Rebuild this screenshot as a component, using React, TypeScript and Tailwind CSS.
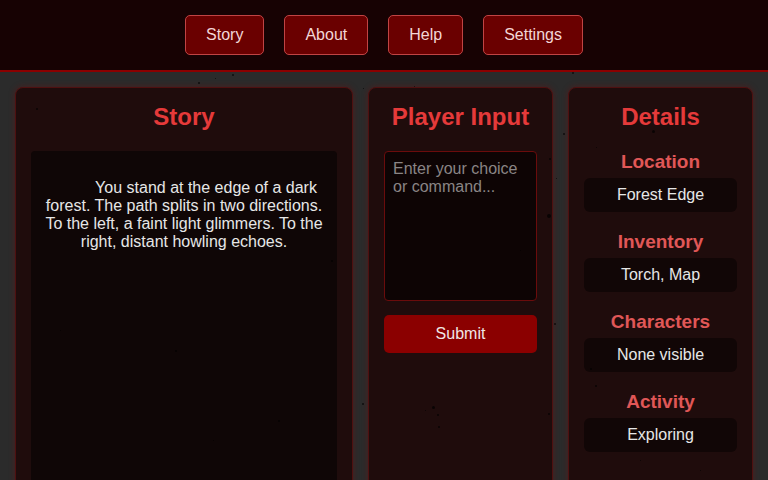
import React from "react"

const navItems = ["Story", "About", "Help", "Settings"]

const details = [
  { label: "Location", value: "Forest Edge" },
  { label: "Inventory", value: "Torch, Map" },
  { label: "Characters", value: "None visible" },
  { label: "Activity", value: "Exploring" },
]

// faint speckles scattered over the page
const specks = [
  [198, 82, 2], [232, 74, 2], [215, 78, 1], [414, 86, 1], [572, 72, 2], [36, 108, 2],
  [563, 133, 2], [549, 158, 2], [596, 147, 1], [652, 130, 3], [547, 214, 4], [556, 178, 1],
  [437, 414, 2], [432, 406, 3], [425, 410, 1], [438, 426, 2], [548, 413, 2], [362, 403, 2],
  [595, 385, 2], [590, 368, 2], [554, 323, 2], [278, 420, 2], [363, 88, 1], [213, 440, 1],
  [640, 460, 1], [700, 470, 1], [60, 330, 1], [175, 350, 2], [520, 250, 1], [331, 260, 2],
]

export default function App() {
  return (
    <div
      className="relative min-h-screen bg-[#2b2b2b] text-[#e6e6e6]"
      style={{ fontFamily: '"Liberation Sans", Arial, sans-serif' }}
    >
      <header className="h-[72px] bg-[#170203] border-b-2 border-[#8b0000] flex justify-center items-start pt-[15px] gap-5">
        {navItems.map((item) => (
          <button
            key={item}
            className="h-10 px-5 text-base leading-[18px] bg-[#6a0000] border border-[#c04444] rounded-[5px] text-[#f3d6d6]"
          >
            {item}
          </button>
        ))}
      </header>

      <main className="flex gap-[15px] p-[15px] items-start">
        <section className="w-[338px] shrink-0 bg-[#1f0c0c] border border-[#4e1010] rounded-lg px-[15px] pt-[15px] pb-[15px] shadow-[0_0_6px_rgba(139,0,0,0.35)]">
          <h2 className="text-2xl leading-7 font-bold text-[#e53a3a] text-center mb-5">Story</h2>
          <div className="h-[400px] bg-[#0f0606] rounded px-[14px] pt-[28px]">
            <p className="text-base leading-[18px] text-center indent-[44px] text-[#e6e6e6]">
              You stand at the edge of a dark forest. The path splits in two directions. To the left, a faint light glimmers. To the right, distant howling echoes.
            </p>
          </div>
        </section>

        <section className="w-[185px] shrink-0 h-[520px] bg-[#1f0c0c] border border-[#4e1010] rounded-lg px-[15px] pt-[15px] shadow-[0_0_6px_rgba(139,0,0,0.35)]">
          <h2 className="text-2xl leading-7 font-bold text-[#e53a3a] text-center mb-5">Player Input</h2>
          <textarea
            placeholder="Enter your choice or command..."
            className="block w-full h-[150px] resize-none bg-[#0d0404] border border-[#6a0c0c] rounded px-2 py-2 text-base leading-[18px] text-[#e6e6e6] placeholder:text-[#8a8585] outline-none"
          />
          <button className="mt-[14px] w-full h-[38px] bg-[#8b0000] rounded-[5px] text-base text-[#f0e6e6]">
            Submit
          </button>
        </section>

        <section className="w-[185px] shrink-0 h-[520px] bg-[#1f0c0c] border border-[#4e1010] rounded-lg px-[15px] pt-[15px] shadow-[0_0_6px_rgba(139,0,0,0.35)]">
          <h2 className="text-2xl leading-7 font-bold text-[#e53a3a] text-center mb-5">Details</h2>
          {details.map((d) => (
            <div key={d.label} className="mb-[19px]">
              <h3 className="text-[19px] leading-[21px] font-bold text-[#e05757] text-center mb-[6px]">{d.label}</h3>
              <div className="h-[34px] bg-[#110606] rounded-md flex items-center justify-center text-base text-[#e6e6e6]">
                {d.value}
              </div>
            </div>
          ))}
        </section>
      </main>

      <div className="pointer-events-none absolute inset-0">
        {specks.map(([x, y, s], i) => (
          <span
            key={i}
            className="absolute rounded-full bg-black/70"
            style={{ left: x, top: y, width: s, height: s }}
          />
        ))}
      </div>
    </div>
  )
}
